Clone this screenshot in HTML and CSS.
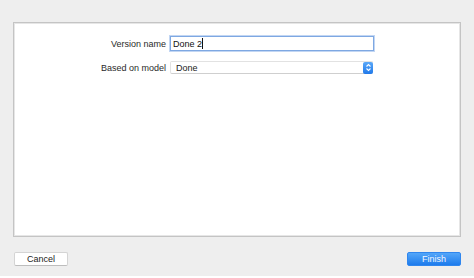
FILE: index.html
```html
<!DOCTYPE html>
<html>
<head>
<meta charset="utf-8">
<link rel="stylesheet" href="styles.css">
</head>
<body>
<div class="sheet">
  <div class="panel">
    <div class="form">
      <label class="label">Version name</label>
      <div class="field focused"><span>Done 2</span><span class="caret"></span></div>
      <label class="label">Based on model</label>
      <div class="popup">
        <span class="popup-text">Done</span>
        <span class="stepper">
          <svg width="7" height="9" viewBox="0 0 7 9"><path d="M1.5 3.5 L3.5 1.5 L5.5 3.5 M1.5 5.5 L3.5 7.5 L5.5 5.5" fill="none" stroke="#fff" stroke-width="1.1"/></svg>
        </span>
      </div>
    </div>
  </div>
  <div class="footer">
    <button class="btn cancel">Cancel</button>
    <button class="btn finish">Finish</button>
  </div>
</div>
</body>
</html>
```
FILE: styles.css
```css
html, body {
  margin: 0;
  padding: 0;
}
body {
  width: 474px;
  height: 278px;
  background: #ffffff;
  font-family: "Liberation Sans", Arial, sans-serif;
  font-size: 9px;
  color: #222;
  overflow: hidden;
}
.sheet {
  box-sizing: border-box;
  height: 276px;
  background: #eeeeee;
  padding: 22px 13px 0 13px;
  display: flex;
  flex-direction: column;
}
.panel {
  box-sizing: border-box;
  height: 215px;
  background: #ffffff;
  border: 1px solid #c4c4c4;
  box-shadow: inset 0 0 0 1px #e6e6e6;
  padding-top: 13px;
}
.form {
  display: grid;
  grid-template-columns: 152px 204px;
  column-gap: 4px;
  row-gap: 10px;
  align-items: center;
}
.label {
  text-align: right;
  color: #2a2a2a;
  font-size: 9px;
}
.field {
  box-sizing: border-box;
  height: 15px;
  border: 1px solid #7ea8e2;
  box-shadow: 0 0 0 1px #c2d6f3;
  background: #fff;
  display: flex;
  align-items: center;
  padding-left: 2px;
  font-size: 9px;
  color: #111;
}
.caret {
  display: inline-block;
  width: 1px;
  height: 11px;
  background: #111;
  margin-left: 0;
}
.popup {
  box-sizing: border-box;
  height: 13px;
  width: 203px;
  background: #fff;
  border: 1px solid #e2e2e2;
  border-bottom-color: #cfcfcf;
  border-radius: 2px;
  display: flex;
  align-items: center;
  justify-content: space-between;
  padding-left: 5px;
}
.popup-text {
  font-size: 9px;
  color: #222;
}
.stepper {
  width: 10px;
  height: 12px;
  margin-right: -1px;
  border-radius: 2px;
  background: linear-gradient(#5aa8f8, #2079ea);
  display: flex;
  align-items: center;
  justify-content: center;
}
.footer {
  margin-top: 15px;
  display: flex;
  justify-content: space-between;
}
.btn {
  box-sizing: border-box;
  height: 14px;
  width: 54px;
  padding: 0;
  margin: 0;
  font-family: "Liberation Sans", Arial, sans-serif;
  font-size: 9px;
  border-radius: 2px;
  line-height: 12px;
}
.cancel {
  margin-left: 1px;
  background: #fff;
  color: #222;
  border: 1px solid #d4d4d4;
  border-bottom-color: #bdbdbd;
}
.finish {
  background: linear-gradient(#53a6f9, #1d7bec);
  color: #f4f8ff;
  border: 1px solid #2f86ee;
}
```
